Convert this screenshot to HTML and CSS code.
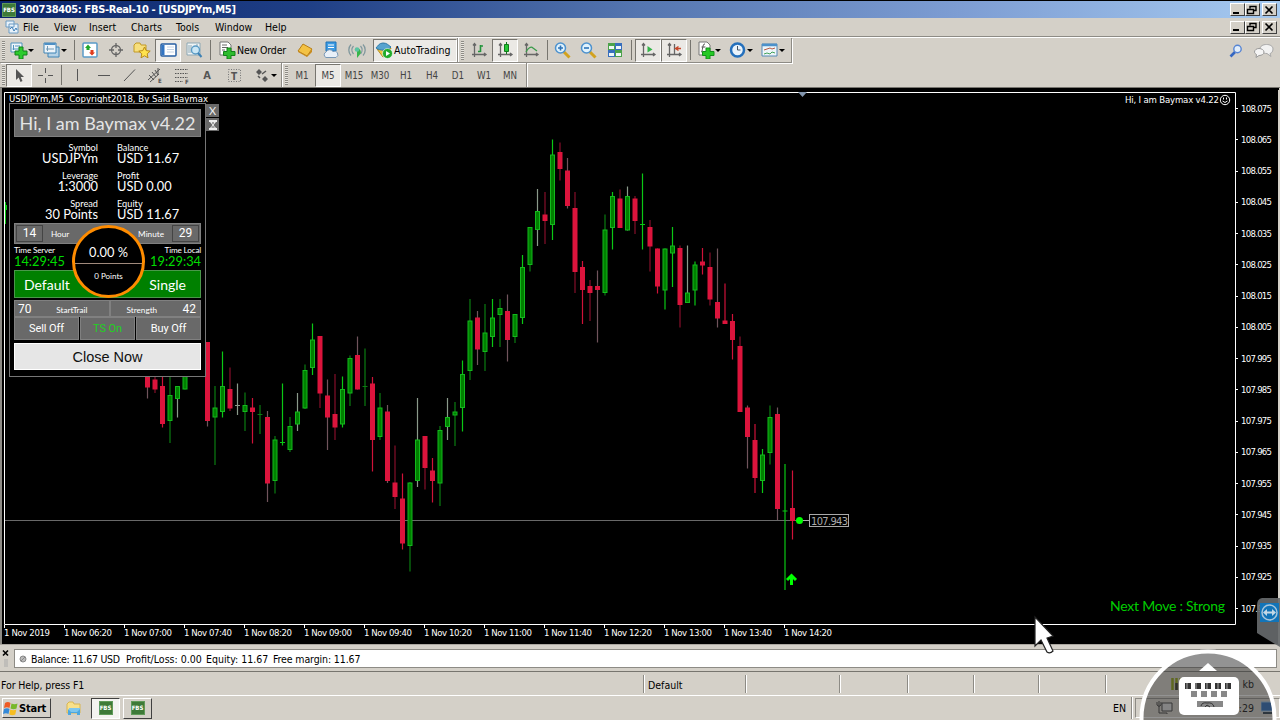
FILE: index.html
```html
<!DOCTYPE html>
<html lang="en">
<head>
    <meta charset="UTF-8" />
    <title>300738405: FBS-Real-10 - [USDJPYm,M5]</title>
    <link rel="stylesheet" href="styles.css">
</head>
<body>
    <header class="titlebar">
        <span class="fbs-icon">FBS</span>
        <h1>300738405: FBS-Real-10 - [USDJPYm,M5]</h1>
        <div class="win-buttons">
            <button><svg width="12" height="10"><path d="M2 8h6" stroke="#000" stroke-width="2"/></svg></button>
            <button><svg width="12" height="10"><path d="M4 3.500V1.500h6v4h-2M1.500 4.500h6v4h-6z" fill="none" stroke="#000" stroke-width="1.400"/></svg></button>
            <button class="close"><svg width="12" height="10"><path d="M2.500 1.500l7 7M9.500 1.500l-7 7" stroke="#000" stroke-width="1.700"/></svg></button>
        </div>
    </header>

    <nav class="menu">
        <svg class="menu-icon" width="14" height="14"><path d="M1 1h8v6H1zM4 4h9v9H4z" fill="#e8f2fa" stroke="#6c9cc4"/><path d="M5 9l2-2 2 4 2-3 1 2" fill="none" stroke="#3f7fb8"/></svg>
        <a class="m-file">File</a>
        <a class="m-view">View</a>
        <a class="m-insert">Insert</a>
        <a class="m-charts">Charts</a>
        <a class="m-tools">Tools</a>
        <a class="m-window">Window</a>
        <a class="m-help">Help</a>
        <div class="win-buttons">
            <button><svg width="12" height="10"><path d="M2 8h6" stroke="#000" stroke-width="2"/></svg></button>
            <button><svg width="12" height="10"><path d="M4 3.500V1.500h6v4h-2M1.500 4.500h6v4h-6z" fill="none" stroke="#000" stroke-width="1.400"/></svg></button>
            <button class="close"><svg width="12" height="10"><path d="M2.500 1.500l7 7M9.500 1.500l-7 7" stroke="#000" stroke-width="1.700"/></svg></button>
        </div>
    </nav>

    <div class="toolbar-row">
        <div class="toolbar main-tools">
            <i class="grip"></i>
            <span class="drop"><svg width="18" height="18"><path d="M1 2h11v9H1z" fill="#eef5fa" stroke="#4f93bd"/><path d="M3.500 4v5M2.500 8h8M5 5h5" stroke="#4f93bd" fill="none"/><path d="M9 6h4v4h4v4h-4v4H9v-4H5v-4h4z" fill="#2dcb2d" stroke="#12801a"/></svg><b></b></span>
            <span class="drop"><svg width="18" height="18"><path d="M5 6h11v10H5z" fill="#b5d2e6" stroke="#3f84b5"/><path d="M1 2h12v10H1z" fill="#edf4f9" stroke="#3f84b5"/><path d="M1.500 3h11" stroke="#4d8fc4" stroke-width="2"/><path d="M4.500 5v5M3 8h8" stroke="#7199b5"/></svg><b></b></span>
            <i class="sep"></i>
            <span class="tool"><svg width="18" height="18"><rect x="2" y="2" width="14" height="14" rx="1" fill="#fff" stroke="#5a9bc8" stroke-width="1.500"/><path d="M7 3.500L10 7H8.500v2h-3V7H4z" fill="#20a82b"/><path d="M11 14.500L8 11.500h1.500V9h3v2.500H14z" fill="#e03c1c"/></svg></span>
            <span class="tool"><svg width="18" height="18"><circle cx="9" cy="9" r="4.500" fill="none" stroke="#666" stroke-width="1.300"/><path d="M9 2v5M9 11v5M2 9h5M11 9h5" stroke="#666" stroke-width="1.300"/></svg></span>
            <span class="tool"><svg width="18" height="18"><path d="M1 4l2-2h4l1 2h5v7H1z" fill="#f7df7d" stroke="#c29a27"/><path d="M11.500 6l1.700 3.600 4 .5-3 2.700.8 4-3.500-2-3.500 2 .8-4-3-2.700 4-.5z" fill="#ffe34d" stroke="#b98a15"/></svg></span>
            <span class="tool on"><svg width="18" height="18"><rect x="2" y="3" width="15" height="12" rx="1" fill="#fff" stroke="#285fa3" stroke-width="1.500"/><path d="M2.500 4h3v10h-3z" fill="#3174c2"/><path d="M8 6h7M8 8.500h7M8 11h7" stroke="#c3d2e4"/></svg></span>
            <span class="tool"><svg width="18" height="18"><path d="M2 2h13v12H2z" fill="#f0f4f5" stroke="#8ca7b4"/><path d="M4 4v8M6 4v8M8 6v6M12 3v9" stroke="#8ca7b4"/><circle cx="10.500" cy="9" r="4" fill="#cbe7f5" stroke="#5a9bc5" stroke-width="1.400"/><path d="M13 12l3.500 4" stroke="#3e81b4" stroke-width="2"/></svg></span>
            <i class="sep wide"></i>
            <span class="new-order"><svg width="18" height="18"><path d="M2 1h8l3 3v10H2z" fill="#fff" stroke="#777"/><path d="M4 4h5M4 6.500h6M4 9h3" stroke="#666"/><path d="M9 7h4v3.500h4v4h-4V18H9v-3.500H5.500v-4H9z" fill="#2dbb2d" stroke="#12801a"/></svg>New Order</span>
            <span class="tool"><svg width="18" height="18"><path d="M2 10L7 3l9 5-5 7z" fill="#f3c244" stroke="#b77e17"/><path d="M2 10l9 5 5-7v3l-5 5-9-5z" fill="#c98b1c"/></svg></span>
            <span class="tool"><svg width="18" height="18"><path d="M4 1h10v9H4z" fill="#3c9be3" stroke="#1d72b8"/><path d="M6 4h6M6 6.500h6" stroke="#fff"/><path d="M4 16.500a3 3 0 0 1 0-5.500 4 4 0 0 1 7-.5 3.300 3.300 0 0 1 3 6z" fill="#e9f0f8" stroke="#7897b5"/></svg></span>
            <span class="tool"><svg width="18" height="18"><g fill="none" stroke="#7f979d" stroke-width="1.300"><path d="M5.500 5a6 6 0 0 0 0 8M3 3.500a8 8 0 0 0 0 11M12.500 5a6 6 0 0 1 0 8M15 3.500a8 8 0 0 1 0 11"/></g><path d="M9 7a4 4 0 0 1 2.500 7L9 17z" fill="#36b54a"/><circle cx="9" cy="8.500" r="2.300" fill="#5cc3a3"/></svg></span>
            <span class="auto on"><svg width="18" height="18"><path d="M2 8l6 8 6-4 2-5z" fill="#f2c63e" stroke="#b28c20"/><path d="M1 7c2-2 3-5 7-5s5 2 8 4c-3 4-11 4-15 1z" fill="#57a3cf" stroke="#317aa8"/><circle cx="12.500" cy="12.500" r="5" fill="#22ab2b" stroke="#fff" stroke-width=".6"/><path d="M11 10l4 2.500-4 2.500z" fill="#fff"/></svg>AutoTrading</span>
            <i class="bar-end"></i>
            <i class="grip second"></i>
            <span class="tool"><svg width="18" height="18"><path d="M4.500 3v13M2 13.500h14M3 4.500l1.500-2L6 4.500M14 12l2 1.500-2 1.500" fill="none" stroke="#666" stroke-width="1.300"/><path d="M10.500 4v7M8 10.500h2.500M10.500 5H13" stroke="#23943b" stroke-width="1.600"/></svg></span>
            <span class="tool on"><svg width="18" height="18"><path d="M4.500 3v13M2 13.500h14M3 4.500l1.500-2L6 4.500M14 12l2 1.500-2 1.500" fill="none" stroke="#666" stroke-width="1.300"/><path d="M10.500 1v12" stroke="#117a1c"/><path d="M8.500 3.500h4v7h-4z" fill="#25c935" stroke="#117a1c"/></svg></span>
            <span class="tool"><svg width="18" height="18"><path d="M4.500 3v13M2 13.500h14M3 4.500l1.500-2L6 4.500M14 12l2 1.500-2 1.500" fill="none" stroke="#666" stroke-width="1.300"/><path d="M4 11c2-4 5-6 7-4l4 3" fill="none" stroke="#3a9b4a" stroke-width="1.300"/></svg></span>
            <i class="sep thin"></i>
            <span class="tool"><svg width="18" height="18"><path d="M10.500 10.500l6 6" stroke="#d2a21f" stroke-width="3"/><circle cx="7.500" cy="7" r="5" fill="#e1f3fd" stroke="#4d92ce" stroke-width="1.500"/><path d="M7.500 4.500v5M5 7h5" stroke="#2d73b8" stroke-width="1.600"/></svg></span>
            <span class="tool"><svg width="18" height="18"><path d="M10.500 10.500l6 6" stroke="#d2a21f" stroke-width="3"/><circle cx="7.500" cy="7" r="5" fill="#e1f3fd" stroke="#4d92ce" stroke-width="1.500"/><path d="M5 7h5" stroke="#2d73b8" stroke-width="1.600"/></svg></span>
            <span class="tool t27"><svg width="18" height="18"><path d="M2 2h7v7H2zM9 9h7v7H9z" fill="#4ba24a"/><path d="M9 2h7v7H9zM2 9h7v7H2z" fill="#376ebd"/><path d="M3 5h5v3H3zM10 5h5v3h-5zM3 12h5v3H3zM10 12h5v3h-5z" fill="#eff6f8"/></svg></span>
            <i class="sep"></i>
            <span class="tool on"><svg width="18" height="18"><path d="M4.500 3v13M2 13.500h14M3 4.500l1.500-2L6 4.500M14 12l2 1.500-2 1.500" fill="none" stroke="#666" stroke-width="1.300"/><path d="M8.500 5l5 3.500-5 3z" fill="#35b54a"/></svg></span>
            <span class="tool on"><svg width="18" height="18"><path d="M4.500 3v13M2 13.500h14M3 4.500l1.500-2L6 4.500M14 12l2 1.500-2 1.500M9.500 3v10" fill="none" stroke="#666" stroke-width="1.300"/><path d="M16 7.500h-5M13.500 5.500l-3 2 3 2" fill="none" stroke="#c8482b" stroke-width="1.400"/></svg></span>
            <i class="sep"></i>
            <span class="drop"><svg width="18" height="18"><path d="M2 1h8l3 3v10H2z" fill="#fff" stroke="#777"/><path d="M8 3c-3-1-2 9-4 8M4.500 6h4" fill="none" stroke="#555"/><path d="M9 7h4v3.500h4v4h-4V18H9v-3.500H5.500v-4H9z" fill="#25c925" stroke="#12901a"/></svg><b></b></span>
            <span class="drop"><svg width="18" height="18"><circle cx="8.500" cy="9" r="6.500" fill="#eaf4fc" stroke="#2470bc" stroke-width="2.500"/><path d="M8.500 5v4h3" fill="none" stroke="#456"/></svg><b></b></span>
            <span class="drop"><svg width="18" height="18"><path d="M1 3h15v12H1z" fill="#edf5f9" stroke="#5489b6"/><path d="M1 4h15" stroke="#4c91cb" stroke-width="2.500"/><path d="M3 9l3-1 3-1 2 1 3-1" fill="none" stroke="#b65943"/><path d="M3 13l3-1 3 1 2-2 3 1" fill="none" stroke="#43a35b"/></svg><b></b></span>
        </div>
        <div class="search-tools">
            <svg width="14" height="14"><path d="M1.500 12.500L6 8" stroke="#3567c2" stroke-width="2.600"/><circle cx="8.500" cy="5" r="3.700" fill="#e2eefb" stroke="#5684d3" stroke-width="1.400"/></svg>
            <svg width="22" height="16"><path d="M7 6c0-3 3-4.500 6.500-4.500S20 3 20 6s-2 4.500-3 4.500l1 3-4-3c-4 0-7-1.500-7-4.500z" fill="#f2f2f2" stroke="#a8a8a8"/><path d="M1.500 9c0-2 2-3.500 4.500-3.500S11 7 11 9s-2 3.500-5 3.500l-3 2 .5-3c-1-.5-2-1.500-2-2.500z" fill="#f5f5f5" stroke="#999"/></svg>
        </div>
    </div>

    <div class="toolbar-row lower">
        <div class="toolbar draw-tools">
            <i class="grip"></i>
            <span class="tool on"><svg width="18" height="18"><path d="M6 3v11l2.700-2.500L10.500 16l2-1-1.800-4H14z" fill="#555"/></svg></span>
            <span class="tool"><svg width="18" height="18"><path d="M9.500 2v5M9.500 12v5M2 9.500h5M12 9.500h5" stroke="#555"/></svg></span>
            <i class="sep"></i>
            <span class="tool"><svg width="18" height="18"><path d="M9.500 3v12" stroke="#555"/></svg></span>
            <span class="tool"><svg width="18" height="18"><path d="M4 9.500h12" stroke="#555"/></svg></span>
            <span class="tool"><svg width="18" height="18"><path d="M4 15L15 3.500" stroke="#555"/></svg></span>
            <span class="tool"><svg width="18" height="18"><path d="M2 14L14 3M4 16l9-8M3 9l5 5M6 6l4 5M9 4l3 5M12 2v6" stroke="#555"/><text x="12" y="17" class="tiny">E</text></svg></span>
            <span class="tool"><svg width="18" height="18"><path d="M3 3.500h13M3 7.500h13M3 11.500h13M3 15.500h8" stroke="#555" stroke-dasharray="1.500 1"/><text x="13" y="17.500" class="tiny">F</text></svg></span>
            <span class="tool letter">A</span>
            <span class="tool t27"><svg width="18" height="18"><path d="M3.500 3.500h12v12h-12z" fill="none" stroke="#777" stroke-dasharray="1 1.500"/><text x="6" y="13.500" class="mid">T</text></svg></span>
            <span class="drop arrows"><svg width="18" height="18"><path d="M3 6l3-3 3 3-3 3zM9 13l3-3 3 3-3 3z" fill="#555"/><path d="M5 10l2 2M9 8l4-3" stroke="#555" stroke-width="1.500"/></svg><b></b></span>
            <i class="bar-end"></i>
            <i class="grip second"></i>
            <span class="tool tf">M1</span>
            <span class="tool tf on">M5</span>
            <span class="tool tf">M15</span>
            <span class="tool tf">M30</span>
            <span class="tool tf">H1</span>
            <span class="tool tf">H4</span>
            <span class="tool tf">D1</span>
            <span class="tool tf">W1</span>
            <span class="tool tf">MN</span>
        </div>
    </div>

    <main class="chart">
        <svg id="plot" width="1280" height="556" viewBox="0 88 1280 556"></svg>

        <section class="panel">
            <h2>Hi, I am Baymax v4.22</h2>
            <div class="account">
                <div class="left"><small>Symbol</small><span>USDJPYm</span></div>
                <div><small>Balance</small><span>USD 11.67</span></div>
                <div class="left"><small>Leverage</small><span>1:3000</span></div>
                <div><small>Profit</small><span>USD 0.00</span></div>
                <div class="left"><small>Spread</small><span>30 Points</span></div>
                <div><small>Equity</small><span>USD 11.67</span></div>
            </div>
            <div class="alarm">
                <span class="num">14</span><small>Hour</small>
                <small class="push">Minute</small><span class="num">29</span>
            </div>
            <div class="times">
                <div><small>Time Server</small><span>14:29:45</span></div>
                <div class="right"><small>Time Local</small><span>19:29:34</span></div>
            </div>
            <div class="modes"><span>Default</span><span>Single</span></div>
            <div class="trail">
                <div><span>70</span><small>StartTrail</small></div>
                <div><small>Strength</small><span>42</span></div>
            </div>
            <div class="switches"><span>Sell Off</span><span class="ts">TS On</span><span>Buy Off</span></div>
            <button class="close-now">Close Now</button>
            <div class="dial"><span>0.00 %</span><small>0 Points</small></div>
        </section>
        <div class="panel-side">
            <span>X</span>
            <span><svg width="8" height="10"><path d="M0 0h8v2H0zM0 8h8v2H0zM1 2h6L4.500 5 7 8H1l2.500-3z" fill="#eee"/><path d="M3 3h2M2.500 7h3" stroke="#555"/></svg></span>
        </div>
    </main>

    <section class="terminal">
        <div class="terminal-side"><svg width="8" height="18"><path d="M1 1.500l5 5M6 1.500l-5 5" stroke="#000" stroke-width="1.600"/><path d="M2 11h4M2 13h4M2 15h4M2 17h4" stroke="#aaa"/></svg></div>
        <div class="balance">
            <svg width="8" height="8"><circle cx="4" cy="4" r="3" fill="#bbb" stroke="#888"/><path d="M2 6l4-4" stroke="#888"/></svg>
            <span class="bal">Balance: 11.67 USD</span><span class="pl">Profit/Loss: 0.00</span><span class="eq">Equity: 11.67</span><span class="fm">Free margin: 11.67</span>
        </div>
    </section>

    <footer class="status">
        <span class="help">For Help, press F1</span>
        <span class="profile">Default</span>
        <span class="c1"></span><span class="c2"></span><span class="c3"></span><span class="c4"></span><span class="c5"></span>
        <span class="traffic"><svg width="16" height="14"><path d="M1.500 1v12M5.500 1v12M9.500 1v12M13.500 1v12" stroke="#8ba000" stroke-width="2.500"/><path d="M5.500 6v7M9.500 4v9" stroke="#222" stroke-width="2.500"/></svg><em>5 kb</em></span>
    </footer>

    <footer class="taskbar">
        <button class="start"><svg width="16" height="15"><path d="M2 2c2-1.500 4-1 5.500 0L6.500 7C5 6 3 6 1 7z" fill="#ee5b25"/><path d="M8.500 2.500c2 1 4 1 6 0l-1 5c-2 1-4 1-6 0z" fill="#77b82a"/><path d="M1 8c2-1 4-1 5.500 0l-1 5C4 12 2 12 0 13z" fill="#3489d8"/><path d="M7.300 8.500c2 1 4 1 6 0l-1 5c-2 1-4 1-6 0z" fill="#f7bd20"/></svg>Start</button>
        <svg class="explorer" width="16" height="16"><path d="M1 4l2-2h4l1 2h6v9H1z" fill="#f8e08a" stroke="#d7b552"/><path d="M3 8h11v4H3z" fill="#7dc6ee"/><path d="M2 15V9l3 3h6l3-3v6h-3v-2H5v2z" fill="#4da7df"/></svg>
        <span class="task active"><i class="fbs-icon">FBS</i></span>
        <span class="task"><i class="fbs-icon">FBS</i></span>
        <span class="lang">EN</span>
        <div class="tray">
            <svg width="18" height="16"><path d="M6 3h10v8H6z" fill="#ddd" stroke="#333"/><path d="M3 1v6M1 2v3q2 3 4 0V2M3 7v6h8v1" fill="none" stroke="#333"/></svg>
            <span class="clock">19:29</span>
            <svg width="12" height="14"><path d="M0 1h12v9H0z" fill="#2165b8" stroke="#8bb8e2"/><path d="M2 12h9" stroke="#234" stroke-width="2"/></svg>
        </div>
    </footer>

    <svg class="remote-tab" width="24" height="50"><path d="M24 0H6Q1 1 1 7v28l23 14z" fill="#66696b" fill-opacity=".92"/><path d="M4 5h19v19H4z" fill="#1274b8"/><circle cx="13.500" cy="14.500" r="7.500" fill="#1274b8" stroke="#a7c5db" stroke-width="1.500"/><path d="M7 14.500l4-3.500v2.500h5V11l4 3.500-4 3.500v-2.500h-5V18z" fill="#c3d8e6"/></svg>

    <svg class="keyboard" width="140" height="72">
        <circle cx="70" cy="70" r="66.500" fill="#3a3a3a" fill-opacity=".55" stroke="#fff" stroke-width="4"/>
        <path d="M61 23l9-8 9 8z" fill="#fff"/>
        <rect x="41" y="29" width="60" height="38" rx="5" fill="#fff"/>
        <g fill="none" stroke-width="6">
            <path d="M47 38h6m4 0h6m4 0h6m4 0h6m4 0h6" stroke="#333"/>
            <path d="M53 46h6m4 0h6m4 0h6m4 0h6" stroke="#888"/>
            <path d="M59 56h26" stroke="#888"/>
        </g>
        <path d="M49 35v6M58 35v6M69 35v6M80 35v6M89 35v6" stroke="#aaa"/>
        <path d="M63 58q1-4 6-3 6-1 7 4M67 59l2-2 3 2" fill="none" stroke="#333"/>
    </svg>

    <svg class="cursor" width="24" height="40" viewBox="0 0 24 40"><path d="M2 2v29l6-6 6 12q3 2 6-1l-6-13 6-2z" fill="#fff" stroke="#222" stroke-width="1.200"/></svg>

    <script src="chart.js"></script>
</body>
</html>
```
FILE: styles.css
```css
* {
    box-sizing: border-box;
}
body {
    font-family: "DejaVu Sans Condensed", "DejaVu Sans", sans-serif;
    font-size: 10.5px;
    background-color: #d4d0c8;
    color: #000;
    margin: 0;
    width: 1280px;
    height: 720px;
    overflow: hidden;
    position: relative;
    display: flex;
    flex-direction: column;
}
svg {
    display: block;
    flex: none;
}
i, em {
    font-style: normal;
}
button {
    font-family: inherit;
    padding: 0;
}

/* title and menu */
.titlebar {
    height: 18px;
    border-top: 1px solid #000;
    background: linear-gradient(90deg, #0a246a, #1f3f86 24%, #5576b0 50%, #7d9dd3 75%, #a6caf0);
    color: #fff;
    display: flex;
    align-items: center;
    padding: 0 3px 0 2px;
}
.titlebar h1 {
    font-size: 11px;
    margin: 0 0 0 3px;
    font-weight: bold;
    white-space: nowrap;
    letter-spacing: -0.35px;
}
.fbs-icon {
    width: 14px;
    height: 14px;
    background-color: #3e7a38;
    border: 1px solid #5f9a58;
    color: #fff;
    font-size: 6px;
    font-weight: bold;
    line-height: 12px;
    text-align: center;
}
.win-buttons {
    margin-left: auto;
    display: flex;
}
.win-buttons button {
    width: 15px;
    height: 13px;
    background-color: #d4d0c8;
    border: 1px solid;
    border-color: #fff #404040 #404040 #fff;
    overflow: hidden;
}
.win-buttons .close {
    margin-left: 2px;
}
.menu {
    height: 19px;
    display: flex;
    align-items: center;
    padding: 0 3px 0 5px;
    border-bottom: 1px solid #8d8b85;
}
.menu-icon {
    margin-right: 4px;
}
.m-file { width: 31px; }
.m-view { width: 35px; }
.m-insert { width: 42px; }
.m-charts { width: 45px; }
.m-tools { width: 39px; }
.m-window { width: 50px; }

/* toolbars */
.toolbar-row {
    height: 26px;
    border-top: 1px solid #fff;
    display: flex;
    justify-content: space-between;
}
.toolbar-row.lower {
    height: 25px;
    border-top: 0;
    border-bottom: 1px solid #77756f;
}
.toolbar {
    display: flex;
    align-items: center;
    height: 25px;
    border-right: 1px solid #8d8b85;
    border-bottom: 1px solid #8d8b85;
    box-shadow: 1px 1px 0 #fff;
}
.main-tools {
    width: 792px;
}
.draw-tools {
    width: 527px;
    height: 24px;
    border-bottom: 0;
    box-shadow: 1px 0 0 #fff;
}
.grip {
    width: 3px;
    height: 19px;
    margin: 0 1px 0 2px;
    background: repeating-linear-gradient(#8d8b85 0 1px, #e8e6e0 1px 2px);
}
.grip.second {
    margin: 0 2px;
}
.draw-tools .grip.second {
    margin: 0 1px 0 2px;
}
.tool {
    width: 26px;
    height: 23px;
    display: flex;
    align-items: center;
    justify-content: center;
    flex: none;
}
.t27 {
    width: 27px;
}
.on {
    background-color: #ebe9e5;
    border: 1px solid;
    border-color: #77756f #fff #fff #77756f;
}
.drop {
    width: 32px;
    padding-left: 4px;
    display: flex;
    align-items: center;
    flex: none;
}
.drop b {
    border: 3px solid transparent;
    border-top-color: #000;
    border-bottom: 0;
}
.drop:nth-child(2) {
    width: 33px;
}
.drop.arrows {
    width: 34px;
    padding-left: 6px;
}
.sep {
    width: 6px;
    height: 20px;
    flex: none;
    background: linear-gradient(90deg, transparent 3px, #77756f 3px 4px, transparent 4px);
}
.sep.wide {
    width: 8px;
}
.sep.thin {
    width: 5px;
}
.main-tools .t27 + .sep {
    width: 7px;
}
.new-order {
    width: 77px;
    padding-left: 3px;
    display: flex;
    align-items: center;
    gap: 1px;
    white-space: nowrap;
    letter-spacing: -0.15px;
}
.auto {
    width: 84px;
    height: 23px;
    margin-left: 3px;
    padding-left: 1px;
    display: flex;
    align-items: center;
    gap: 1px;
}
.bar-end {
    width: 2px;
    height: 24px;
    border-left: 1px solid #8d8b85;
    border-right: 1px solid #fff;
}
.tf {
    color: #444;
    font-size: 9.7px;
}
.letter {
    font-size: 11px;
    font-weight: bold;
    color: #555;
}
.tiny {
    font-size: 6px;
    font-weight: bold;
    fill: #555;
}
.mid {
    font-size: 10px;
    font-weight: bold;
    fill: #555;
}
.search-tools {
    display: flex;
    align-items: center;
    gap: 10px;
    padding-right: 5px;
}

/* chart */
.chart {
    height: 556px;
    background-color: #000;
    position: relative;
    border-left: 2px solid #8d8b85;
    border-right: 1px solid #d4d0c8;
}
#plot {
    margin-left: -2px;
    width: 1280px;
}
#plot .axis {
    font-size: 9.5px;
    fill: #fff;
}
#plot .price {
    font-size: 11px;
    fill: #aaa;
}
#plot .next {
    font-family: Lato, sans-serif;
    font-size: 14px;
    fill: #0c0;
}

/* Baymax panel */
.panel {
    position: absolute;
    left: 7px;
    top: 15px;
    width: 197px;
    height: 274px;
    background-color: #000;
    border: 1px solid #777;
    padding: 5px 4px;
    color: #fff;
    font-family: Lato, sans-serif;
    font-size: 12.8px;
}
.panel small {
    font-size: 9.2px;
    line-height: 10px;
}
.panel h2 {
    margin: 0;
    height: 28px;
    line-height: 26px;
    background-color: #696969;
    border: 1px solid #808080;
    font-size: 18px;
    font-weight: normal;
    color: #e4e4e4;
    text-align: center;
    white-space: nowrap;
}
.account {
    display: grid;
    grid-template-columns: 84px 1fr;
    column-gap: 19px;
    grid-auto-rows: 28px;
    padding-top: 6px;
    height: 86px;
}
.account div {
    display: flex;
    flex-direction: column;
}
.account span {
    line-height: 10px;
    white-space: nowrap;
}
.account .left {
    align-items: flex-end;
}
.alarm {
    height: 21px;
    background-color: #696969;
    border: 1px solid #808080;
    display: flex;
    align-items: center;
    padding: 0 1px;
}
.alarm .num {
    width: 27px;
    height: 17px;
    line-height: 15px;
    border: 1px solid #444;
    text-align: center;
    font-family: Roboto, sans-serif;
    font-size: 12px;
}
.alarm small {
    margin: 0 8px;
    font-size: 8.2px;
}
.alarm .push {
    margin-left: auto;
}
.times {
    height: 26px;
    display: flex;
    justify-content: space-between;
    padding-top: 2px;
}
.times div {
    display: flex;
    flex-direction: column;
}
.times .right {
    align-items: flex-end;
}
.times small {
    font-size: 8.2px;
    line-height: 8px;
    letter-spacing: -0.2px;
}
.times span {
    color: #0d0;
    line-height: 14px;
}
.modes {
    height: 28px;
    background-color: #008000;
    border: 1px solid #4a974a;
    display: flex;
    justify-content: space-between;
    padding: 0 14px 0 9px;
    line-height: 27px;
    font-size: 14px;
}
.trail {
    display: flex;
    height: 17px;
    margin-top: 2px;
}
.trail div {
    flex: 1;
    background-color: #696969;
    border: 1px solid #808080;
    display: flex;
    align-items: center;
    justify-content: space-between;
    padding: 0 4px 0 3px;
}
.trail div:first-child {
    padding-right: 21px;
}
.trail div:last-child {
    padding-left: 16px;
}
.trail span {
    font-family: Roboto, sans-serif;
    font-size: 12px;
}
.trail small {
    font-size: 8.2px;
    padding-top: 2px;
}
.switches {
    display: flex;
    gap: 1px;
    height: 23px;
    font-family: Roboto, sans-serif;
    font-size: 11px;
}
.switches span {
    width: 65px;
    background-color: #696969;
    border: 1px solid #808080;
    text-align: center;
    line-height: 21px;
    letter-spacing: -0.1px;
}
.switches .ts {
    width: 55px;
    color: #1fd21f;
}
.close-now {
    display: block;
    width: 187px;
    height: 27px;
    margin-top: 3px;
    background-color: #e6e6e6;
    border: 1px solid #fff;
    font-family: "Liberation Sans", Arial, sans-serif;
    font-size: 14.5px;
    color: #111;
}
.dial {
    position: absolute;
    left: 62px;
    top: 121px;
    width: 73px;
    height: 73px;
    border-radius: 50%;
    border: 3px solid #ff8c00;
    background: linear-gradient(#000 35px, #a08a7c 35px 36px, #000 36px);
    text-align: center;
}
.dial span {
    display: block;
    height: 35px;
    padding-top: 16px;
    line-height: 17px;
}
.dial small {
    display: block;
    padding-top: 8px;
    font-size: 8px;
}
.panel-side {
    position: absolute;
    left: 204px;
    top: 16px;
    display: flex;
    flex-direction: column;
    gap: 1px;
}
.panel-side span {
    width: 13px;
    height: 13px;
    background-color: #696969;
    color: #eee;
    font-family: Lato, sans-serif;
    font-size: 11px;
    line-height: 13px;
    display: flex;
    align-items: center;
    justify-content: center;
}

/* terminal and status */
.terminal {
    height: 28px;
    padding: 4px 3px 3px 0;
    display: flex;
    border-top: 1px solid #aaa69f;
    border-bottom: 1px solid #77756f;
}
.terminal-side {
    width: 14px;
    padding: 0 2px;
}
.balance {
    flex: 1;
    background-color: #fff;
    border: 1px solid #8d8b85;
    display: flex;
    align-items: center;
    padding-left: 4px;
    white-space: nowrap;
}
.balance svg {
    margin-right: 4px;
}
.bal {
    width: 95px;
    letter-spacing: -0.3px;
}
.pl { width: 80px; }
.eq { width: 67px; }
.fm {
    letter-spacing: -0.12px;
}
.status {
    height: 24px;
    display: flex;
    align-items: center;
    border-bottom: 1px solid #fff;
}
.status > span {
    height: 18px;
    line-height: 20px;
    border-right: 1px solid #8d8b85;
    box-shadow: 1px 0 0 #fff;
}
.status .help {
    width: 644px;
    padding-left: 1px;
    letter-spacing: -0.1px;
}
.status .profile {
    width: 102px;
    padding-left: 4px;
}
.status .c1 { width: 94px; }
.status .c2 { width: 68px; }
.status .c3 { width: 66px; }
.status .c4 { width: 65px; }
.status .c5 { width: 67px; }
.status .traffic {
    flex: 1;
    display: flex;
    align-items: center;
    padding: 0 26px 0 65px;
    justify-content: space-between;
    white-space: nowrap;
    border-right: 0;
    box-shadow: none;
}
.taskbar {
    height: 24px;
    display: flex;
    align-items: center;
    padding-left: 2px;
}
.start {
    width: 49px;
    height: 20px;
    display: flex;
    align-items: center;
    gap: 0;
    background-color: #d4d0c8;
    border: 1px solid;
    border-color: #fff #404040 #404040 #fff;
    font-size: 11px;
    font-weight: bold;
    letter-spacing: -0.2px;
}
.explorer {
    margin: 0 9px 0 15px;
}
.task {
    width: 29px;
    height: 21px;
    margin-right: 3px;
    display: flex;
    align-items: center;
    justify-content: center;
    border: 1px solid;
    border-color: #fff #404040 #404040 #fff;
}
.task.active {
    background-color: #f4f3f0;
    border-color: #404040 #fff #fff #404040;
}
.lang {
    margin-left: auto;
    padding-right: 5px;
    line-height: 22px;
    border-right: 1px solid #8d8b85;
    box-shadow: 1px 0 0 #fff;
}
.tray {
    width: 145px;
    height: 20px;
    margin-left: 3px;
    border: 1px solid;
    border-color: #8d8b85 #fff #fff #8d8b85;
    display: flex;
    align-items: center;
    padding: 0 6px 0 20px;
}
.tray .clock {
    margin: 0 7px 0 auto;
}

/* things floating over the desktop */
.remote-tab {
    position: absolute;
    right: 0;
    top: 598px;
}
.keyboard {
    position: absolute;
    left: 1138px;
    top: 648px;
}
.cursor {
    position: absolute;
    left: 1033px;
    top: 615px;
}
```
FILE: chart.js
```javascript
// [color, wick, high, body top, body bottom, low] - one per 5 minutes
// wick: b = bright, d = dim, w = gray. Rows are screen heights
const candles = [
    ["r","w",365,370,387.5,398.5],["r","d",376,379.5,389.5,393],["r","b",370,386,424,427.5],
    ["g","d",370,395,421,443],["g","w",386,386,399,417.5],["g","d",370,370,389.5,389.5],
    null,null,
    ["r","w",342,342,421,426.5],["g","d",386,407.5,417.5,465],["g","b",351.5,386,412,417.5],
    ["r","d",367.5,389,408.5,411],["g","w",383.5,405,405.5,415],["g","d",392.5,405,412,431],
    ["r","b",398,407.5,412,443.5],["g","d",405,414,415,434],["r","w",411,417,483.5,502],
    ["g","d",436,439.5,481,493.5],["g","b",383.5,442,443,445.5],["g","d",417,426,450,452],
    ["g","w",393,411.5,424.5,431],["g","d",364.5,370,408.5,409],["g","b",323.5,339.5,368,375],
    ["r","d",336,336,393.5,408],["r","w",379.5,395.5,417.5,450],["r","d",374,414,427.5,440],
    ["g","b",376.5,389,424.5,427.5],["g","d",355.5,358,393.5,406],["r","w",336.5,355,389.5,389.5],
    ["g","d",348.5,386,387,406],["r","b",377,383.5,440,471.5],["g","d",393,407.5,437,440],
    ["r","w",405,411.5,481,483],["r","d",445.5,482.5,497,509],["r","b",473.5,498.5,543.5,549.5],
    ["g","d",482,482.5,546,571.5],["g","w",398,439.5,481,487],["r","d",436,436,468,489.5],
    ["r","b",458,470.5,481,502.5],["g","d",426,430,483.5,506],["g","w",398,417,427,440],
    ["g","d",402,411.5,415.5,446],["g","b",360.5,374,408,431.5],["g","d",299,320.5,371,380],
    ["r","w",311,317.5,349.5,365],["g","d",304,332.5,352,371],["g","b",299,317.5,337,347],
    ["g","d",299,308,315,347],["r","w",294.5,311,340,361.5],["g","d",314,314,337,343],
    ["g","b",255,267,318,324],["g","d",227,227,265,271.5],["g","w",189,211,230,246],
    ["r","d",192,214.5,221,244],["g","b",139.5,154.5,225,240],["r","d",142.5,152,169,180.5],
    ["r","w",158,170.5,206,208.5],["r","d",192,208,272,293],["r","b",261,267,290,324],
    ["r","d",280,286,293,321],["r","w",270.5,286,290,342.5],["g","d",214.5,229.5,293,295.5],
    ["g","b",192,196,228,249.5],["r","d",189.5,198.5,228,228],["g","w",186.5,196,230.5,230.5],
    ["r","d",196,198.5,221,234],["g","b",173.5,224,225,249.5],["r","d",220,227,246.5,271.5],
    ["r","b",248.5,248.5,286.5,293.5],["g","b",248.5,248.5,290.5,309.5],["g","b",227,245.5,253.5,287],
    ["r","d",245.5,248,305,327.5],["g","w",245.5,292.5,303,303],["g","b",261.5,264.5,290.5,305.5],
    ["r","b",248,261.5,265.5,274.5],["r","d",252.5,267,299.5,305.5],["r","w",248.5,302,318.5,327.5],
    ["r","b",283.5,320.5,324,324],["r","b",314,321,340,359.5],["r","d",336.5,346,412,412],
    ["r","w",405.5,407.5,437,468.5],["r","b",424,440,478,493],["g","b",449,454.5,481,493],
    ["g","d",405.5,417,453,464.5],["r","w",407.5,414,509,520],["g","b",464,510.5,511.5,590],
    ["r","b",470.5,508,521,539.5]
];
const wicks = {
    g: { b: "#0ac814", d: "#0b7d12", w: "#8a9a8a" },
    r: { b: "#cf1239", d: "#860f2a", w: "#70545c" }
};

let out = "";

// frame and last price
out += '<path d="M4.5 624.500V92.500H1235.500V624.500z" fill="none" stroke="#fff"/>';
out += '<path d="M1278.500 90v554" stroke="#d4d0c8"/>';
out += '<path d="M798 92h9l-4.500 5z" fill="#8295ad"/>';
out += '<path d="M5 520.500H810" stroke="#696969"/>';

// price axis
for (let i = 0; i < 17; i++) {
    const y = 108 + i * 31.25;
    const price = (108.075 - i * 0.01).toFixed(3);
    out += `<path d="M1236 ${Math.round(y) + 0.5}h2" stroke="#fff"/>`;
    out += `<text class="axis" x="1241" y="${y + 3.5}" textLength="31">${price}</text>`;
}

// time axis
for (let i = 0; i < 14; i++) {
    const min = 340 + i * 40;
    const time = String(Math.floor(min / 60)).padStart(2, "0") + ":" + String(min % 60).padStart(2, "0");
    const x = 4 + i * 60;
    out += `<path d="M${x + 0.5} 625v3" stroke="#fff"/>`;
    out += `<text class="axis" x="${x}" y="636" textLength="${i ? 48 : 46}">1 Nov ${i ? time : "2019"}</text>`;
}

// sliver of an older candle left of the panel
out += '<path d="M5.500 202v22" stroke="#0ac814"/><path d="M5 205h2v5H5z" fill="#0ac814"/>';

candles.forEach((c, i) => {
    if (!c) return;
    const [color, wick, high, top, bottom, low] = c;
    const x = 147.5 + i * 7.5;
    out += `<path d="M${x} ${high}V${low}" stroke="${wicks[color][wick]}" stroke-width="1.200"/>`;
    if (bottom - top <= 1) {
        out += `<path d="M${x - 2.5} ${top + 0.5}h5" stroke="${wicks[color][wick]}"/>`;
    } else if (color === "g") {
        out += `<rect x="${x - 2}" y="${top + 0.5}" width="4" height="${bottom - top - 1}" fill="#008000" stroke="#13b81c"/>`;
    } else {
        out += `<rect x="${x - 2.5}" y="${top}" width="5" height="${bottom - top}" fill="#dc143c"/>`;
    }
});

// price tag and signal arrow
out += '<path d="M801 520.500h9" stroke="#aaa"/><circle cx="799.500" cy="520.500" r="3.500" fill="#0f0"/>';
out += '<rect x="809.500" y="514.500" width="39" height="12" fill="#000" stroke="#aaa"/>';
out += '<text class="price" x="811" y="525" textLength="37">107.943</text>';
out += '<path d="M791.500 585v-10M787 580l4.500-4.500 4.500 4.500" fill="none" stroke="#0f0" stroke-width="3"/>';

out += '<text class="axis" x="9" y="102" textLength="199">USDJPYm,M5&#160; Copyright2018, By Said Baymax</text>';
out += '<text class="axis" x="1125" y="103" textLength="94">Hi, I am Baymax v4.22</text>';
out += '<circle cx="1225" cy="100" r="4.700" fill="none" stroke="#fff"/><path d="M1223.500 97.500v2M1226.500 97.500v2M1222.500 101q2.500 3 5 0" fill="none" stroke="#fff"/>';
out += '<text class="next" x="1110" y="611" textLength="115">Next Move : Strong</text>';

document.getElementById("plot").innerHTML = out;
```
